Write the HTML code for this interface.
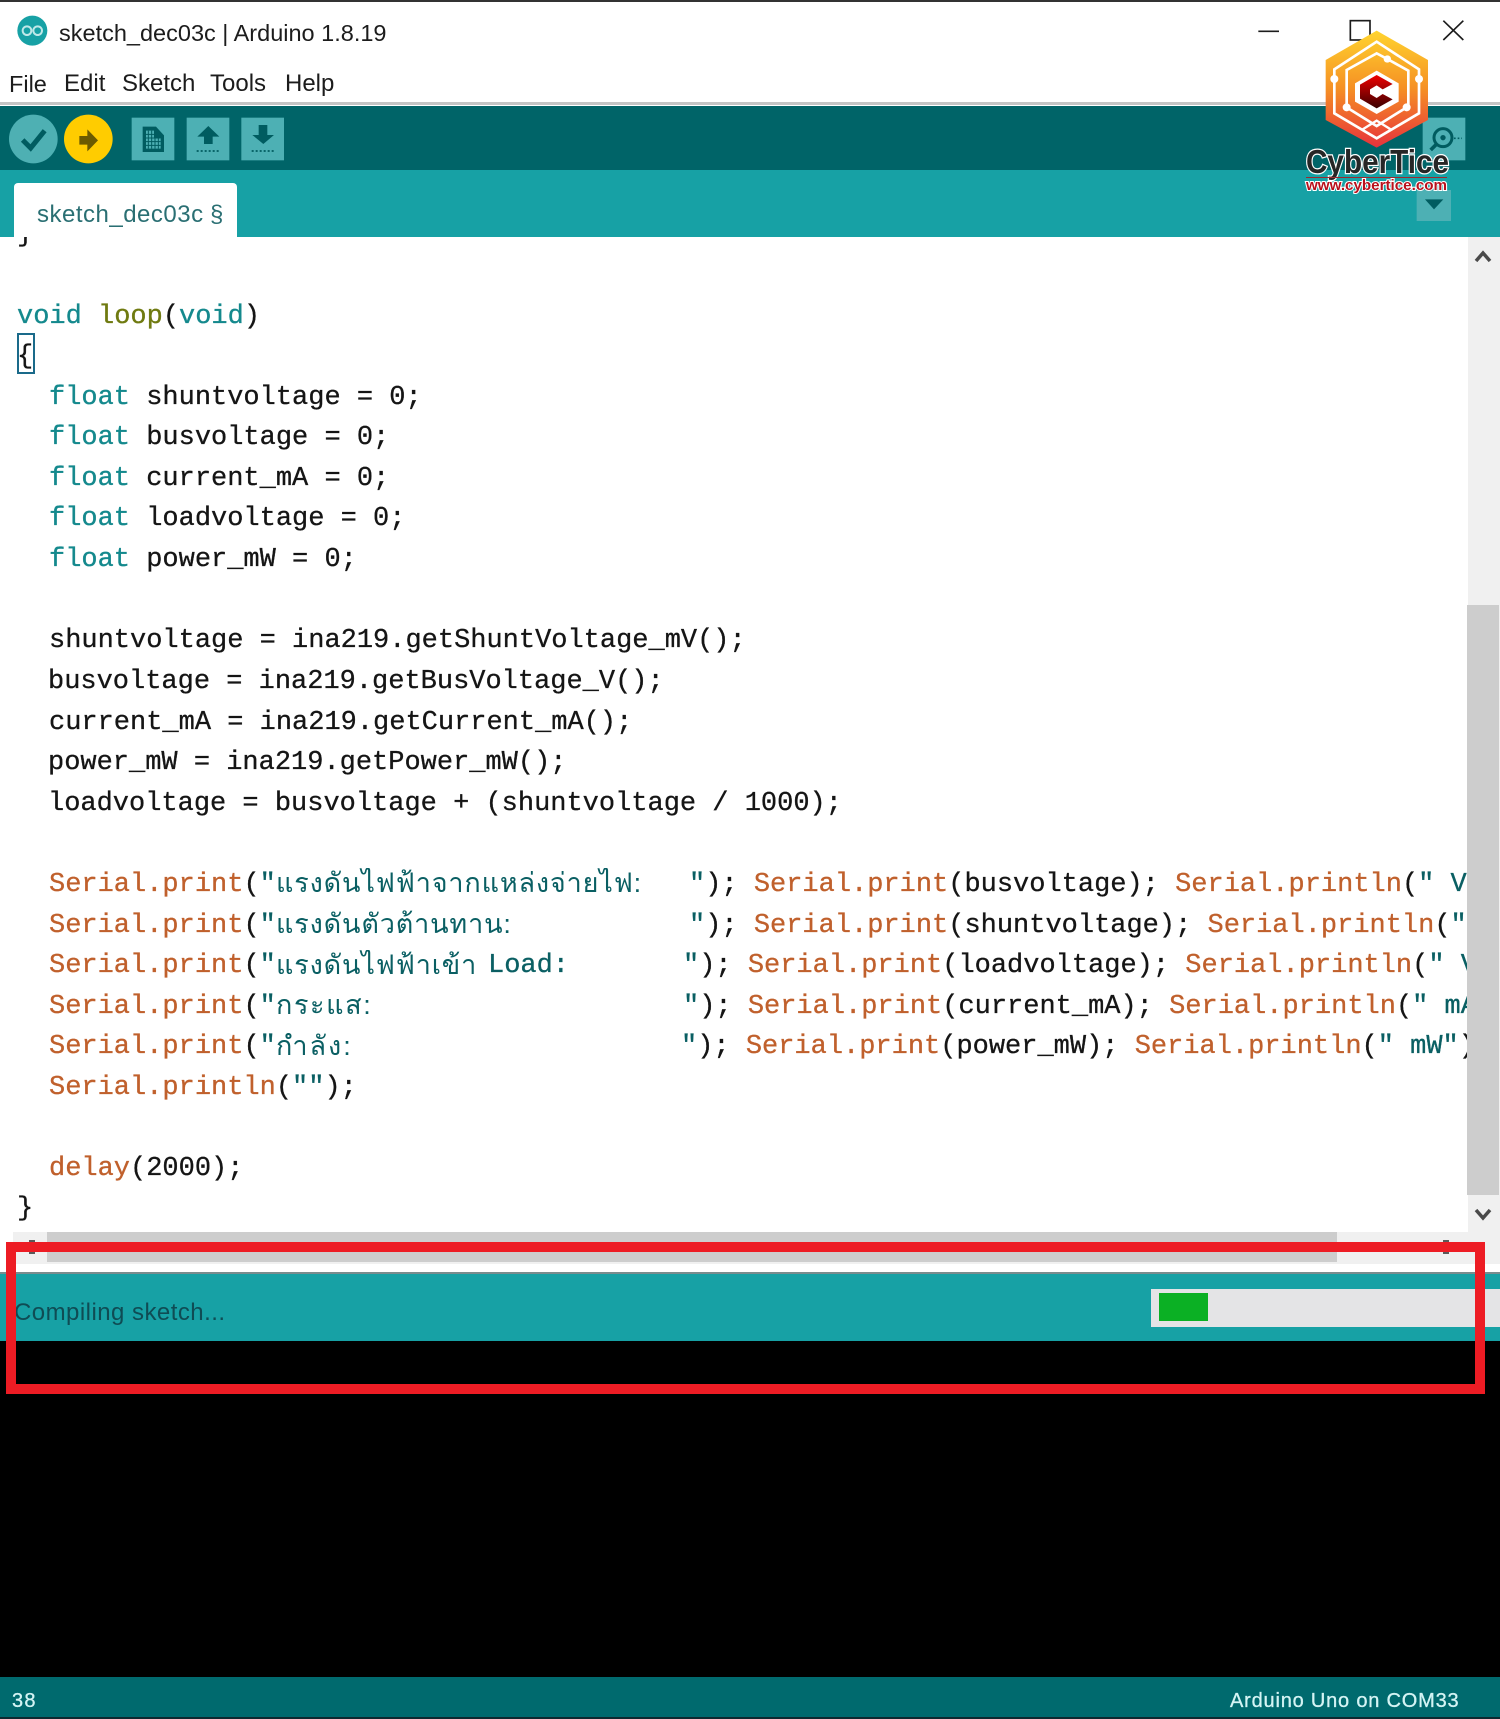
<!DOCTYPE html>
<html lang="en"><head><meta charset="utf-8"><title>sketch_dec03c | Arduino 1.8.19</title>
<style>
html,body{margin:0;padding:0;background:#fff}
#p{position:relative;width:1500px;height:1719px;overflow:hidden;background:#fff;font-family:"Liberation Sans",sans-serif}
.a{position:absolute}
.t{position:absolute;white-space:pre}
#ed{position:absolute;left:0;top:237px;width:1468px;height:995px;overflow:hidden;background:#fff}
.l{position:absolute;white-space:pre;font:27px/40px "Liberation Mono","Noto Sans CJK SC",monospace;color:#151515;filter:blur(.35px);-webkit-text-stroke:.3px currentColor}
.k{color:#14898d}.o{color:#c0602c}.g{color:#6f7a10}.s{color:#0a5f63}
.th{font-family:"Liberation Sans","Noto Sans CJK SC",sans-serif;-webkit-text-stroke:0}
</style></head><body><div id="p">
<div class="a" style="left:0;top:0;width:1500px;height:2px;background:#333"></div>
<div class="a" style="left:0;top:102px;width:1500px;height:3px;background:#c4c4c4"></div>
<div class="a" style="left:0;top:106px;width:1500px;height:64px;background:#006468"></div>
<div class="a" style="left:0;top:170px;width:1500px;height:67px;background:#17a1a5"></div>
<div class="a" style="left:14px;top:183px;width:223px;height:54px;background:#fff;border-radius:4px 4px 0 0"></div>

<div class="t" style="left:59px;top:18px;font-size:23.5px;line-height:30px;color:#1c1c1c">sketch_dec03c | Arduino 1.8.19</div>
<div class="t" style="left:9px;top:69px;font-size:23.5px;line-height:30px;color:#1c1c1c">File</div>
<div class="t" style="left:64px;top:69px;font-size:24px;line-height:30px;color:#1c1c1c">Edit</div>
<div class="t" style="left:122px;top:69px;font-size:24px;line-height:30px;color:#1c1c1c">Sketch</div>
<div class="t" style="left:210px;top:69px;font-size:24px;line-height:30px;color:#1c1c1c">Tools</div>
<div class="t" style="left:285px;top:69px;font-size:24px;line-height:30px;color:#1c1c1c">Help</div>
<div class="t" style="left:37px;top:200px;font-size:24px;line-height:30px;letter-spacing:.5px;color:#2a6f73">sketch_dec03c</div>
<div class="t" style="left:210px;top:200px;font-size:24px;line-height:30px;color:#2a6f73">§</div>

<div id="ed">
<div class="l" style="left:17px;top:-22px">}</div>
<div class="l" style="left:17px;top:60px"><span class="k">void</span> <span class="g">loop</span>(<span class="k">void</span>)</div>
<div class="l" style="left:17px;top:100px">{</div>
<div class="a" style="left:17px;top:96px;width:14px;height:37px;border:2px solid #1a6a8a"></div>
<div class="l" style="left:49px;top:141px"><span class="k">float</span> shuntvoltage = 0;</div>
<div class="l" style="left:49px;top:181px"><span class="k">float</span> busvoltage = 0;</div>
<div class="l" style="left:49px;top:222px"><span class="k">float</span> current_mA = 0;</div>
<div class="l" style="left:49px;top:262px"><span class="k">float</span> loadvoltage = 0;</div>
<div class="l" style="left:49px;top:303px"><span class="k">float</span> power_mW = 0;</div>
<div class="l" style="left:49px;top:384px">shuntvoltage = ina219.getShuntVoltage_mV();</div>
<div class="l" style="left:48px;top:425px">busvoltage = ina219.getBusVoltage_V();</div>
<div class="l" style="left:49px;top:466px">current_mA = ina219.getCurrent_mA();</div>
<div class="l" style="left:48px;top:506px">power_mW = ina219.getPower_mW();</div>
<div class="l" style="left:48px;top:547px">loadvoltage = busvoltage + (shuntvoltage / 1000);</div>

<div class="l" style="left:49px;top:628px"><span class="o">Serial.print</span>(<span class="s">"</span></div>
<div class="l th s" style="left:276px;top:626px;letter-spacing:.85px">แรงดันไฟฟ้าจากแหล่งจ่ายไฟ:</div>
<div class="l" style="left:689px;top:628px"><span class="s">"</span>); <span class="o">Serial.print</span>(busvoltage); <span class="o">Serial.println</span>(<span class="s">" V</span></div>

<div class="l" style="left:49px;top:669px"><span class="o">Serial.print</span>(<span class="s">"</span></div>
<div class="l th s" style="left:276px;top:667px;letter-spacing:.85px">แรงดันตัวต้านทาน:</div>
<div class="l" style="left:689px;top:669px"><span class="s">"</span>); <span class="o">Serial.print</span>(shuntvoltage); <span class="o">Serial.println</span>(<span class="s">"</span></div>

<div class="l" style="left:49px;top:709px"><span class="o">Serial.print</span>(<span class="s">"</span></div>
<div class="l th s" style="left:276px;top:708px;letter-spacing:.85px">แรงดันไฟฟ้าเข้า</div>
<div class="l s" style="left:488px;top:709px">Load:</div>
<div class="l" style="left:683px;top:709px"><span class="s">"</span>); <span class="o">Serial.print</span>(loadvoltage); <span class="o">Serial.println</span>(<span class="s">" V</span></div>

<div class="l" style="left:49px;top:750px"><span class="o">Serial.print</span>(<span class="s">"</span></div>
<div class="l th s" style="left:276px;top:748px;letter-spacing:1.6px">กระแส:</div>
<div class="l" style="left:683px;top:750px"><span class="s">"</span>); <span class="o">Serial.print</span>(current_mA); <span class="o">Serial.println</span>(<span class="s">" mA</span></div>

<div class="l" style="left:49px;top:790px"><span class="o">Serial.print</span>(<span class="s">"</span></div>
<div class="l th s" style="left:276px;top:789px;letter-spacing:2px">กำลัง:</div>
<div class="l" style="left:681px;top:790px"><span class="s">"</span>); <span class="o">Serial.print</span>(power_mW); <span class="o">Serial.println</span>(<span class="s">" mW"</span>);</div>

<div class="l" style="left:49px;top:831px"><span class="o">Serial.println</span>(<span class="s">""</span>);</div>
<div class="l" style="left:49px;top:912px"><span class="o">delay</span>(2000);</div>
<div class="l" style="left:17px;top:952px">}</div>
</div>

<div class="a" style="left:1468px;top:237px;width:32px;height:1027px;background:#f0f0f0"></div>
<div class="a" style="left:1467px;top:605px;width:32px;height:590px;background:#cdcdcd"></div>
<div class="a" style="left:13px;top:1232px;width:1487px;height:32px;background:#f0f0f0"></div>
<div class="a" style="left:47px;top:1232px;width:1290px;height:30px;background:#cdcdcd"></div>
<div class="a" style="left:0;top:1272px;width:1500px;height:2px;background:#7a8c8e"></div>
<div class="a" style="left:0;top:1274px;width:1500px;height:67px;background:#17a1a5"></div>
<div class="a" style="left:0;top:1341px;width:1500px;height:336px;background:#000"></div>
<div class="a" style="left:0;top:1677px;width:1500px;height:40px;background:#006a6e"></div>
<div class="a" style="left:0;top:1717px;width:1500px;height:2px;background:#0c2a30"></div>
<div class="a" style="left:1151px;top:1289px;width:349px;height:38px;background:#e4e4e6"></div>
<div class="a" style="left:1159px;top:1293px;width:49px;height:28px;background:#0bb024"></div>
<div class="t" style="left:14px;top:1298px;font-size:24px;line-height:30px;letter-spacing:.46px;color:#0f4c54">Compiling sketch...</div>
<div class="t" style="left:12px;top:1688px;font-size:20px;line-height:26px;color:#d4f4f4;letter-spacing:1.2px;-webkit-text-stroke:.3px #d4f4f4">38</div>
<div class="t" style="left:1230px;top:1688px;font-size:20px;line-height:26px;color:#d4f4f4;letter-spacing:.8px;-webkit-text-stroke:.3px #d4f4f4">Arduino Uno on COM33</div>

<svg class="a" style="left:0;top:0" width="1500" height="1719" viewBox="0 0 1500 1719" fill="none">
<g transform="scale(.33333)">
<circle cx="97" cy="92" r="45" fill="#17a1a5"/>
<circle cx="81" cy="92" r="13" stroke="#bfe8e8" stroke-width="6"/><circle cx="113" cy="92" r="13" stroke="#bfe8e8" stroke-width="6"/>
<circle cx="100" cy="417" r="73" fill="#4eb0b3"/>
<path d="M68 420L92 444L134 392" stroke="#005c60" stroke-width="15"/>
<circle cx="265" cy="417" r="73" fill="#ffcc00"/>
<path d="M238 408H262V388L294 421L262 454V434H238Z" fill="#6b5a00"/>
<rect x="395" y="353" width="128" height="128" fill="#4db0b4"/>
<rect x="560" y="353" width="128" height="128" fill="#4db0b4"/>
<rect x="724" y="353" width="128" height="128" fill="#4db0b4"/>
<path d="M428 380H468L492 406V456H428Z" fill="#005c60"/>
<path d="M438 392H462V414H482V446H438Z" fill="#4db0b4"/>
<path d="M445 392V446M455 392V446M465 414V446M475 414V446" stroke="#005c60" stroke-width="3"/>
<path d="M438 403H462M438 414H482M438 425H482M438 436H482" stroke="#005c60" stroke-width="3"/>
<path d="M625 378L658 410H638V432H612V410H592Z" fill="#005c60"/>
<path d="M590 453H660" stroke="#005c60" stroke-width="5" stroke-dasharray="6 6"/>
<path d="M776 375H802V405H822L790 432L757 405H776Z" fill="#005c60"/>
<path d="M755 453H825" stroke="#005c60" stroke-width="5" stroke-dasharray="6 6"/>
</g>
<g transform="translate(1200,0) scale(.33333)">
<path d="M175 94H237" stroke="#1c1c1c" stroke-width="5"/>
<rect x="451" y="62" width="59" height="58" stroke="#1c1c1c" stroke-width="5"/>
<path d="M730 62L790 120M790 62L730 120" stroke="#1c1c1c" stroke-width="5"/>
<rect x="668" y="353" width="128" height="128" fill="#4db0b4"/>
<circle cx="729" cy="413" r="27" stroke="#005c60" stroke-width="9"/>
<circle cx="729" cy="413" r="8" fill="#005c60"/>
<path d="M708 434L692 450" stroke="#005c60" stroke-width="11"/>
<path d="M762 415H786" stroke="#005c60" stroke-width="5" stroke-dasharray="5 6"/>
<rect x="650" y="570" width="103" height="93" fill="#4db0b4"/>
<path d="M675 598H730L702 628Z" fill="#005c60"/>
</g>
<path d="M1476 261L1483 253L1490 261" stroke="#4a4a4a" stroke-width="3.5"/>
<path d="M1476 1210L1483 1218L1490 1210" stroke="#4a4a4a" stroke-width="3.5"/>
<rect x="29" y="1240" width="6" height="14" fill="#5a5a5a"/>
<rect x="1443" y="1240" width="6" height="14" fill="#5a5a5a"/>
<rect x="11" y="1247" width="1469" height="142" stroke="#ed1c24" stroke-width="10"/>
<defs>
<linearGradient id="hx" x1="0" y1="0" x2="0" y2="1"><stop offset="0" stop-color="#ffd42e"/><stop offset=".5" stop-color="#f58f24"/><stop offset="1" stop-color="#e7323c"/></linearGradient>
<linearGradient id="cc" x1="0" y1="0" x2="0" y2="1"><stop offset="0" stop-color="#f00000"/><stop offset="1" stop-color="#3a0000"/></linearGradient>
</defs>
<g transform="translate(1200,0) scale(.33333)">
<path d="M530 92L684 180V360L530 443L377 360V180Z" fill="url(#hx)"/>
<g stroke="#fff" stroke-width="8">
<path d="M403 237V208L530 125L657 208V237"/>
<path d="M403 237V340L530 415L657 340V237"/>
<path d="M440 322V210L530 160L562 177M562 177L625 212V322"/>
<path d="M440 322L530 378L620 322"/>
<path d="M488 388L530 362L572 388" stroke-width="7"/>
</g>
<circle cx="403" cy="237" r="12" fill="#fff"/><circle cx="657" cy="237" r="12" fill="#fff"/>
<circle cx="562" cy="177" r="11" fill="#fff"/><circle cx="440" cy="322" r="12" fill="#fff"/><circle cx="620" cy="322" r="12" fill="#fff"/>
<path d="M530 212L596 250V305L530 342L465 305V250Z" fill="#fff"/>
<path d="M530 225L578 252L548 268L530 256L510 268V282L530 294L548 282L578 298L530 325L480 296V254Z" fill="url(#cc)"/>
</g>
<text x="1306" y="173" font-family="Liberation Sans" font-weight="bold" font-size="33" fill="#262626" stroke="#fff" stroke-width="2.5" paint-order="stroke" textLength="143" lengthAdjust="spacingAndGlyphs">CyberTice</text>
<path d="M1306 177.500H1447" stroke="#9a2a30" stroke-width="1"/>
<text x="1306" y="190" font-family="Liberation Sans" font-weight="bold" font-size="14.500" fill="#b8101c" stroke="#fff" stroke-width="2" paint-order="stroke" textLength="141" lengthAdjust="spacingAndGlyphs">www.cybertice.com</text>
</svg>
</div></body></html>
